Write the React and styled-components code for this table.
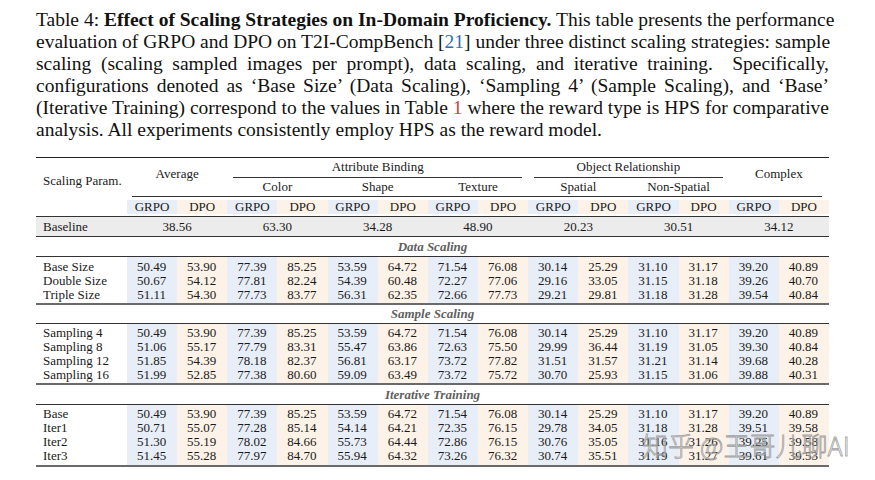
import React from "react";
import styled, { createGlobalStyle } from "styled-components";

const GlobalStyle = createGlobalStyle`
  html, body { margin: 0; padding: 0; background: #fff; }
  body {
    font-family: "Liberation Serif", "Times New Roman", serif;
    color: #111;
  }
`;

const TONES = { g: "#e8eef7", d: "#fdf2e7" };

/* ---------- page + caption ---------- */
const Page = styled.div`
  position: relative;
  width: 875px;
  height: 480px;
  overflow: hidden;
  box-sizing: border-box;
  padding: 9px 0 0 36px;
`;

const Caption = styled.div`
  width: 793px;
  font-size: 19.5px;
  line-height: 22px;
`;

const CaptionLine = styled.div`
  white-space: nowrap;
  text-align: ${(p) => (p.$last ? "left" : "justify")};
  text-align-last: ${(p) => (p.$last ? "left" : "justify")};
`;

const Bold = styled.b`
  font-weight: 700;
`;

const Link = styled.span`
  color: ${(p) => (p.$red ? "#c8463f" : "#2f6db5")};
`;

/* ---------- table ---------- */
const Table = styled.table`
  margin-top: 16px;
  width: 793px;
  border-collapse: separate;
  border-spacing: 0;
  table-layout: fixed;
  font-size: 13px;
  line-height: 14px;
  color: #1a1a1a;
`;

const HeadCell = styled.th`
  font-weight: 400;
  padding: ${(p) => p.$pad || "2px 0"};
  text-align: ${(p) => (p.$left ? "left" : "center")};
  vertical-align: middle;
  border-top: ${(p) => (p.$top ? "1.5px solid #222" : "none")};
  border-bottom: ${(p) => (p.$bottom ? "1px solid #333" : "none")};
  white-space: nowrap;
`;

const GroupTitle = styled.div`
  margin: 0 6px;
  padding-bottom: 3px;
  border-bottom: 1px solid #333;
`;

const MethodCell = styled.th`
  font-weight: 400;
  padding: 4px 0 2px;
  border-bottom: 1px solid #333;
  background-image: linear-gradient(#333, #333);
  background-repeat: no-repeat;
  background-size: ${(p) => (p.$first ? "calc(100% - 5px)" : p.$end ? "calc(100% - 7px)" : "100%")} 1px;
  background-position: ${(p) => (p.$first ? "right top" : "left top")};
`;

const Chip = styled.div`
  height: 14px;
  background: ${(p) => TONES[p.$tone]};
`;

const BaselineCell = styled.td`
  padding: 3px 0 2px ${(p) => (p.$label ? "7px" : "0")};
  text-align: ${(p) => (p.$label ? "left" : "center")};
  background: #ececec;
  border-bottom: 1px solid #333;
`;

const SectionTitle = styled.td`
  padding: ${(p) => p.$pad || "3px 0 2px"};
  text-align: center;
  font-weight: 700;
  font-style: italic;
  color: #5f5f5f;
  border-bottom: 1px solid #333;
`;

const BodyCell = styled.td`
  padding-top: ${(p) => p.$pt || 0}px;
  padding-bottom: ${(p) => p.$pb || 0}px;
  padding-left: ${(p) => (p.$label ? "7px" : "0")};
  text-align: ${(p) => (p.$label ? "left" : "center")};
  background: ${(p) => (p.$tone ? TONES[p.$tone] : "transparent")};
  border-bottom: ${(p) => (p.$end ? "2px solid #6a6a6a" : "none")};
  white-space: nowrap;
`;

const Watermark = styled.div`
  position: absolute;
  left: 642px;
  top: 432px;
  font-family: "Noto Sans CJK SC", "Noto Sans", sans-serif;
  font-weight: 300;
  font-size: 26px;
  line-height: 26px;
  color: rgba(255, 255, 255, 0.55);
  -webkit-text-stroke: 0.8px rgba(130, 130, 130, 0.75);
  white-space: nowrap;
  pointer-events: none;
`;

/* ---------- data ---------- */
const subHeads = ["Color", "Shape", "Texture", "Spatial", "Non-Spatial"];
const baseline = ["38.56", "63.30", "34.28", "48.90", "20.23", "30.51", "34.12"];

const sections = [
  {
    title: "Data Scaling",
    titlePad: "3px 0 2px",
    pt: 3,
    pb: 1,
    rows: [
      ["Base Size", "50.49 53.90 77.39 85.25 53.59 64.72 71.54 76.08 30.14 25.29 31.10 31.17 39.20 40.89"],
      ["Double Size", "50.67 54.12 77.81 82.24 54.39 60.48 72.27 77.06 29.16 33.05 31.15 31.18 39.26 40.70"],
      ["Triple Size", "51.11 54.30 77.73 83.77 56.31 62.35 72.66 77.73 29.21 29.81 31.18 31.28 39.54 40.84"],
    ],
  },
  {
    title: "Sample Scaling",
    titlePad: "2px 0 2px",
    pt: 2,
    pb: 1,
    rows: [
      ["Sampling 4", "50.49 53.90 77.39 85.25 53.59 64.72 71.54 76.08 30.14 25.29 31.10 31.17 39.20 40.89"],
      ["Sampling 8", "51.06 55.17 77.79 83.31 55.47 63.86 72.63 75.50 29.99 36.44 31.19 31.05 39.30 40.84"],
      ["Sampling 12", "51.85 54.39 78.18 82.37 56.81 63.17 73.72 77.82 31.51 31.57 31.21 31.14 39.68 40.28"],
      ["Sampling 16", "51.99 52.85 77.38 80.60 59.09 63.49 73.72 75.72 30.70 25.93 31.15 31.06 39.88 40.31"],
    ],
  },
  {
    title: "Iterative Training",
    titlePad: "3px 0 2px",
    pt: 2,
    pb: 2,
    rows: [
      ["Base", "50.49 53.90 77.39 85.25 53.59 64.72 71.54 76.08 30.14 25.29 31.10 31.17 39.20 40.89"],
      ["Iter1", "50.71 55.07 77.28 85.14 54.14 64.21 72.35 76.15 29.78 34.05 31.18 31.28 39.51 39.58"],
      ["Iter2", "51.30 55.19 78.02 84.66 55.73 64.44 72.86 76.15 30.76 35.05 31.16 31.26 39.25 39.58"],
      ["Iter3", "51.45 55.28 77.97 84.70 55.94 64.32 73.26 76.32 30.74 35.51 31.19 31.27 39.61 39.53"],
    ],
  },
];

const methods = Array.from({ length: 14 }, (_, i) => (i % 2 === 0 ? "GRPO" : "DPO"));

export default function App() {
  return (
    <Page>
      <GlobalStyle />
      <Caption>
        <CaptionLine>
          Table 4: <Bold>Effect of Scaling Strategies on In-Domain Proficiency.</Bold> This table presents the performance
        </CaptionLine>
        <CaptionLine>
          evaluation of GRPO and DPO on T2I-CompBench [<Link>21</Link>] under three distinct scaling strategies: sample
        </CaptionLine>
        <CaptionLine>
          scaling (scaling sampled images per prompt), data scaling, and iterative training. &nbsp;Specifically,
        </CaptionLine>
        <CaptionLine>
          configurations denoted as ‘Base Size’ (Data Scaling), ‘Sampling 4’ (Sample Scaling), and ‘Base’
        </CaptionLine>
        <CaptionLine>
          (Iterative Training) correspond to the values in Table <Link $red>1</Link> where the reward type is HPS for comparative
        </CaptionLine>
        <CaptionLine $last>
          analysis. All experiments consistently employ HPS as the reward model.
        </CaptionLine>
      </Caption>

      <Table>
        <colgroup>
          <col style={{ width: 91 }} />
          {methods.map((_, i) => (
            <col key={i} />
          ))}
        </colgroup>
        <thead>
          <tr>
            <HeadCell rowSpan={3} $left $top $bottom $pad="0 0 12px 7px">
              Scaling Param.
            </HeadCell>
            <HeadCell colSpan={2} rowSpan={2} $top $pad="0 0 6px">
              Average
            </HeadCell>
            <HeadCell colSpan={6} $top $pad="2px 0 0">
              <GroupTitle>Attribute Binding</GroupTitle>
            </HeadCell>
            <HeadCell colSpan={4} $top $pad="2px 0 0">
              <GroupTitle>Object Relationship</GroupTitle>
            </HeadCell>
            <HeadCell colSpan={2} rowSpan={2} $top $pad="0 0 6px">
              Complex
            </HeadCell>
          </tr>
          <tr>
            {subHeads.map((h) => (
              <HeadCell key={h} colSpan={2}>
                {h}
              </HeadCell>
            ))}
          </tr>
          <tr>
            {methods.map((m, i) => (
              <MethodCell key={i} $first={i === 0} $end={i === 13}>
                <Chip $tone={i % 2 === 0 ? "g" : "d"}>{m}</Chip>
              </MethodCell>
            ))}
          </tr>
        </thead>
        <tbody>
          <tr>
            <BaselineCell $label>Baseline</BaselineCell>
            {baseline.map((v, i) => (
              <BaselineCell key={i} colSpan={2}>
                {v}
              </BaselineCell>
            ))}
          </tr>
          {sections.map((s) => (
            <React.Fragment key={s.title}>
              <tr>
                <SectionTitle colSpan={15} $pad={s.titlePad}>
                  {s.title}
                </SectionTitle>
              </tr>
              {s.rows.map(([label, vals], r) => {
                const first = r === 0;
                const last = r === s.rows.length - 1;
                const pt = first ? s.pt : 0;
                const pb = last ? s.pb : 0;
                return (
                  <tr key={label}>
                    <BodyCell $label $pt={pt} $pb={pb} $end={last}>
                      {label}
                    </BodyCell>
                    {vals.split(" ").map((v, i) => (
                      <BodyCell key={i} $tone={i % 2 === 0 ? "g" : "d"} $pt={pt} $pb={pb} $end={last}>
                        {v}
                      </BodyCell>
                    ))}
                  </tr>
                );
              })}
            </React.Fragment>
          ))}
        </tbody>
      </Table>

      <Watermark>知乎 @王哥儿聊AI</Watermark>
    </Page>
  );
}
